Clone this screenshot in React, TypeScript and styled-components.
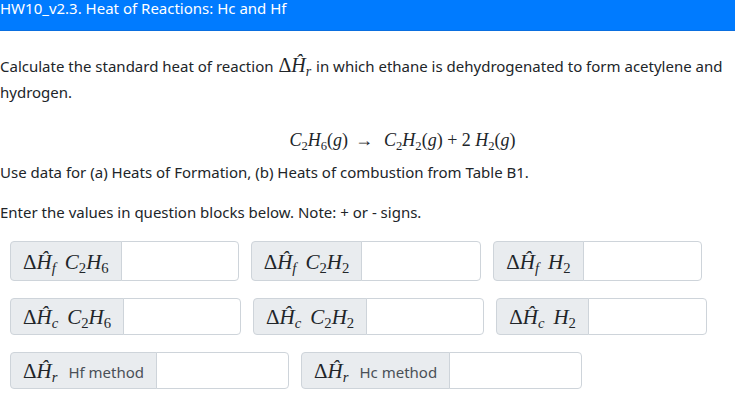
import React from "react";
import styled, { createGlobalStyle } from "styled-components";

const Global = createGlobalStyle`
  html, body { margin: 0; padding: 0; background: #fff; }
  body {
    font-family: "Noto Sans", "Open Sans", sans-serif;
    font-size: 15px;
    line-height: 23px;
    color: #212529;
  }
`;

const Header = styled.div`
  height: 31px;
  background: #007bff;
  border-bottom: 1px solid #0a6fe0;
  box-sizing: border-box;
  color: #fff;
  font-size: 15px;
  line-height: 16px;
  padding: 0;
  white-space: nowrap;
`;

const Body = styled.div`
  padding: 0;
`;

const Para = styled.p<{ $top: number; $lh?: number }>`
  margin: ${(p) => p.$top}px 0 0 0;
  font-size: 15px;
  line-height: ${(p) => p.$lh ?? 23}px;
`;

const Equation = styled.div`
  margin: 23px 0 0 0;
  padding-left: 70px;
  text-align: center;
  font-family: "Liberation Serif", "DejaVu Serif", serif;
  font-size: 18px;
  line-height: 24px;
  white-space: nowrap;
`;

const Mi = styled.span`
  font-family: "Liberation Serif", "DejaVu Serif", serif;
  font-style: italic;
`;

const Mo = styled.span`
  font-family: "Liberation Serif", "DejaVu Serif", serif;
  font-style: normal;
`;

const Sub = styled.sub<{ $italic?: boolean }>`
  font-size: 70%;
  line-height: 0;
  vertical-align: -0.3em;
  font-style: ${(p) => (p.$italic ? "italic" : "normal")};
  font-family: "Liberation Serif", "DejaVu Serif", serif;
`;

const Space = styled.span<{ $w: number }>`
  display: inline-block;
  width: ${(p) => p.$w}px;
`;

const InlineMath = styled.span`
  font-size: 20px;
  line-height: 0;
  white-space: nowrap;
  margin: 0 1px;
`;

const Rows = styled.div`
  display: flex;
  flex-direction: column;
  gap: 17px;
  padding-left: 10px;
  margin-top: 17px;
`;

const Row = styled.div`
  display: flex;
  gap: 12px;
`;

const Group = styled.div<{ $h: number }>`
  display: flex;
  height: ${(p) => p.$h}px;
`;

const Addon = styled.div`
  display: flex;
  align-items: center;
  padding: 0 12px;
  background: #e9ecef;
  border: 1px solid #ced4da;
  border-radius: 4px 0 0 4px;
  color: #212529;
`;

const AddonMath = styled.span`
  font-size: 21px;
  line-height: 24px;
  white-space: nowrap;
`;

const Label = styled.span`
  font-family: "Noto Sans", "Open Sans", sans-serif;
  font-size: 15px;
  color: #495057;
`;

const Input = styled.input<{ $w: number }>`
  width: ${(p) => p.$w}px;
  box-sizing: border-box;
  margin-left: -1px;
  border: 1px solid #ced4da;
  border-radius: 0 4px 4px 0;
  background: #fff;
  outline: none;
  padding: 0 12px;
`;

const DH = ({ sub }: { sub: string }) => (
  <>
    <Mo>Δ</Mo>
    <Mi>Ĥ</Mi>
    <Sub $italic>{sub}</Sub>
  </>
);

const Species = ({ parts }: { parts: [string, string][] }) => (
  <>
    {parts.map(([el, n], i) => (
      <React.Fragment key={i}>
        <Mi>{el}</Mi>
        {n && <Sub>{n}</Sub>}
      </React.Fragment>
    ))}
  </>
);

type Cell = {
  sub: string;
  species?: [string, string][];
  label?: string;
  w: number;
};

const rows: { h: number; cells: Cell[] }[] = [
  {
    h: 40,
    cells: [
      { sub: "f", species: [["C", "2"], ["H", "6"]], w: 118 },
      { sub: "f", species: [["C", "2"], ["H", "2"]], w: 120 },
      { sub: "f", species: [["H", "2"]], w: 119 },
    ],
  },
  {
    h: 37,
    cells: [
      { sub: "c", species: [["C", "2"], ["H", "6"]], w: 118 },
      { sub: "c", species: [["C", "2"], ["H", "2"]], w: 118 },
      { sub: "c", species: [["H", "2"]], w: 119 },
    ],
  },
  {
    h: 37,
    cells: [
      { sub: "r", label: "Hf method", w: 133 },
      { sub: "r", label: "Hc method", w: 133 },
    ],
  },
];

export default function App() {
  return (
    <>
      <Global />
      <Header>HW10_v2.3. Heat of Reactions: Hc and Hf</Header>
      <Body>
        <Para $top={22} $lh={26}>
          Calculate the standard heat of reaction{" "}
          <InlineMath>
            <DH sub="r" />
          </InlineMath>{" "}
          in which ethane is dehydrogenated to form acetylene and hydrogen.
        </Para>
        <Equation>
          <Species parts={[["C", "2"], ["H", "6"]]} />
          <Mo>(</Mo>
          <Mi>g</Mi>
          <Mo>)</Mo>
          <Space $w={7} />
          <Mo>→</Mo>
          <Space $w={11} />
          <Species parts={[["C", "2"], ["H", "2"]]} />
          <Mo>(</Mo>
          <Mi>g</Mi>
          <Mo>)</Mo>
          <Mo> + 2 </Mo>
          <Species parts={[["H", "2"]]} />
          <Mo>(</Mo>
          <Mi>g</Mi>
          <Mo>)</Mo>
        </Equation>
        <Para $top={9}>
          Use data for (a) Heats of Formation, (b) Heats of combustion from Table B1.
        </Para>
        <Para $top={17}>Enter the values in question blocks below. Note: + or - signs.</Para>
        <Rows>
          {rows.map((row, ri) => (
            <Row key={ri}>
              {row.cells.map((c, ci) => (
                <Group key={ci} $h={row.h}>
                  <Addon>
                    <AddonMath>
                      <DH sub={c.sub} />
                      <Space $w={c.label ? 11 : 9} />
                      {c.species ? <Species parts={c.species} /> : <Label>{c.label}</Label>}
                    </AddonMath>
                  </Addon>
                  <Input $w={c.w} type="text" />
                </Group>
              ))}
            </Row>
          ))}
        </Rows>
      </Body>
    </>
  );
}
